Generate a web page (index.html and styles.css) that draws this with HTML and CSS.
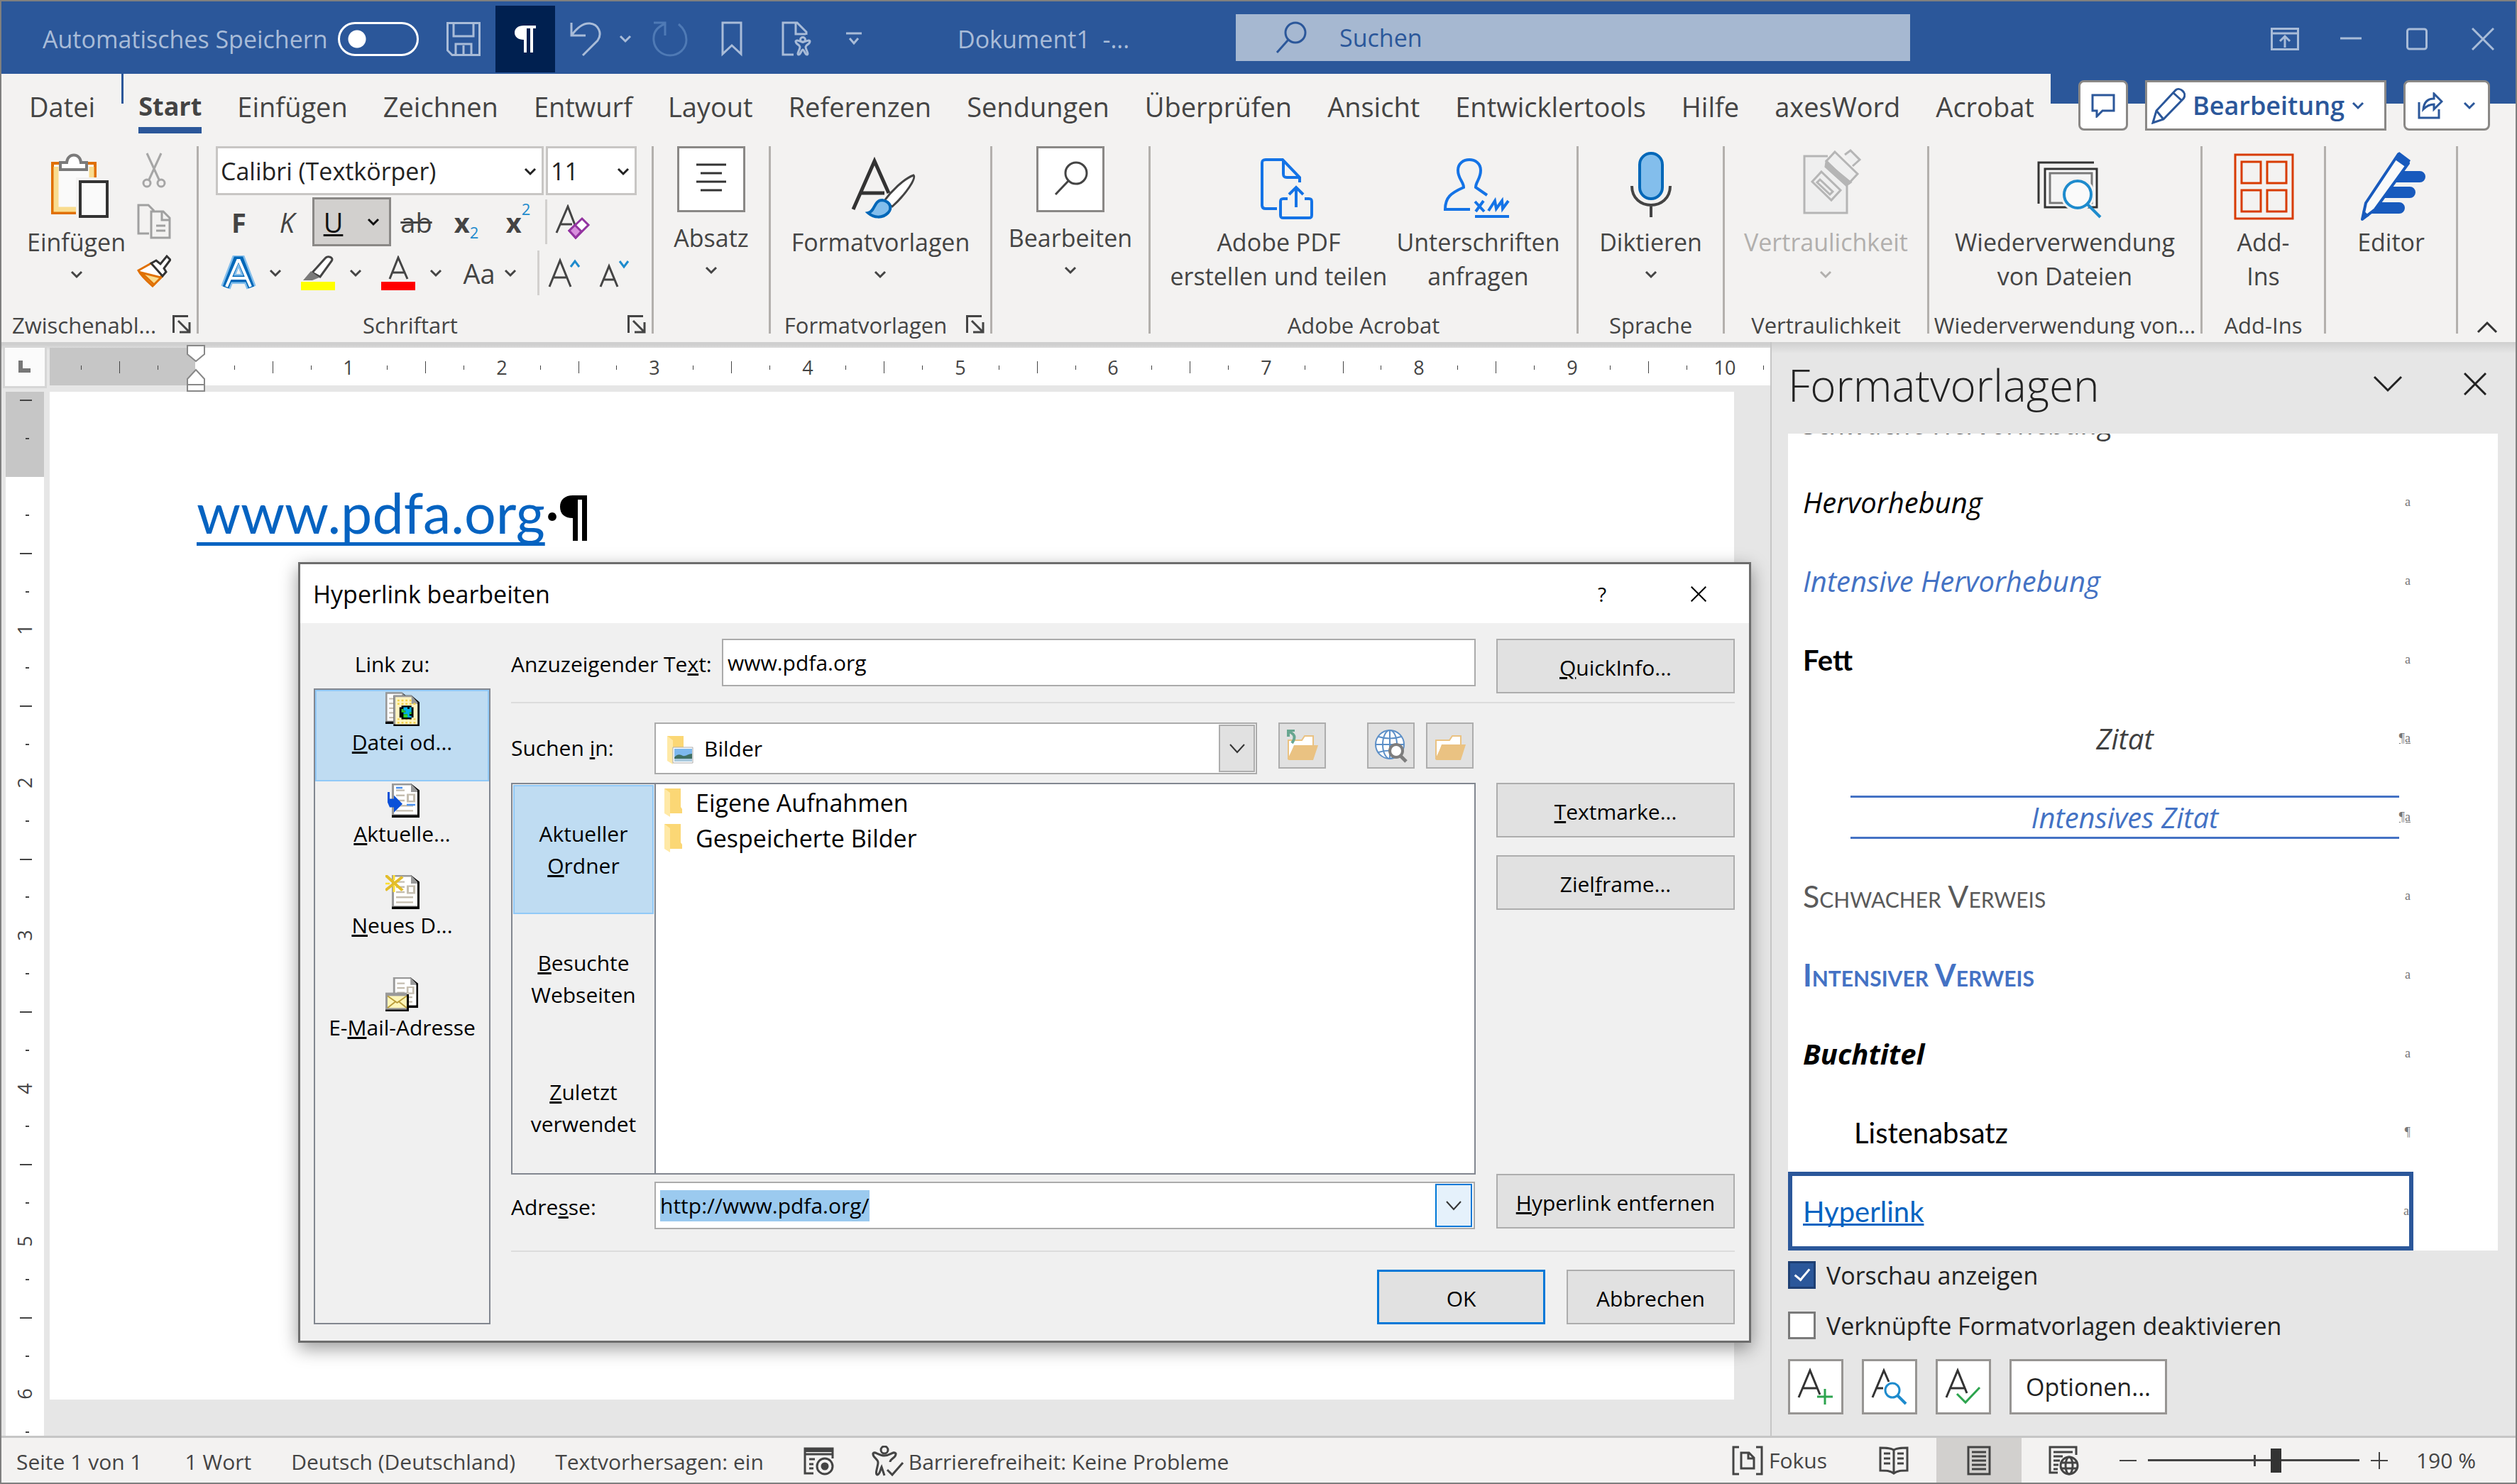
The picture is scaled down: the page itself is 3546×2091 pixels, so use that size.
FILE: index.html
```html
<!DOCTYPE html>
<html lang="de">
<head>
  <meta charset="UTF-8">
  <meta name="viewport" content="width=device-width, initial-scale=1">
  <title>Dokument1 - Word</title>
  <link rel="stylesheet" href="styles.css">
</head>
<body>

<svg class="defs" aria-hidden="true">
  <symbol id="chevron" viewBox="0 0 18 12"><path d="M2 2l7 7 7-7" fill="none" stroke="currentColor" stroke-width="3"/></symbol>
  <symbol id="launcher" viewBox="0 0 26 26"><path d="M1.500 25V1.500H22M8 8l15 15M24 10v14H10" fill="none" stroke="currentColor" stroke-width="3"/></symbol>
  <symbol id="close" viewBox="0 0 32 32"><path d="M1 1l30 30M31 1L1 31" fill="none" stroke="currentColor" stroke-width="3"/></symbol>
  <symbol id="folder" viewBox="0 0 28 42">
    <path d="M2 1h23v26l2 3v6H8z" fill="#fbd775"/>
    <path d="M2 1l8 6v34l-8-5z" fill="#ffe9a6"/>
  </symbol>
  <symbol id="sheet" viewBox="0 0 13 20">
    <path d="M0 0h9l4 4v16H0z" fill="#000"/>
    <path d="M0 0h9l3 4v14.500H0z" fill="#999"/>
    <path d="M1 1h8v4h3v13H1z" fill="#fff"/>
    <path d="M2 4h4M2 7h4M2 10h4M2 13h8M2 16h8" stroke="#c5beb0" stroke-width="1"/>
    <path d="M7.500 6.500h3v4h-3z" fill="#fff" stroke="#c5beb0"/>
  </symbol>
</svg>

<div class="window">

  <header class="titlebar">
    <div class="quick">
      <label class="autosave">Automatisches Speichern <input type="checkbox" class="toggle"></label>
      <button class="qbtn" aria-label="Speichern">
        <svg width="48" height="48" viewBox="0 0 48 48" fill="none" stroke="currentColor" stroke-width="3"><path d="M1.500 1.500h45v45H8l-6.500-6.500zM10 2v18h28V2M13 46V31h22v15M24 33v13"/></svg>
      </button>
      <button class="qbtn active" aria-label="Formatierungszeichen">
        <svg width="32" height="38" viewBox="0 0 32 38"><path d="M31 0v4h-4v34h-4V4h-5v34h-4V20C6 20 1 16 1 10S6 0 14 0z" fill="#fff"/></svg>
      </button>
      <button class="qbtn undo" aria-label="Rückgängig">
        <svg width="44" height="50" viewBox="0 0 44 50" fill="none" stroke="currentColor" stroke-width="3"><path d="M2 2v18h20M2 20C10 9 18 2 28 3c12 1 18 14 11 24L18 48"/></svg>
      </button>
      <button class="qdrop" aria-label="Rückgängig-Liste"><svg class="chev"><use href="#chevron"/></svg></button>
      <button class="qbtn dim" aria-label="Wiederholen">
        <svg width="50" height="50" viewBox="0 0 50 50" fill="none" stroke="currentColor" stroke-width="3"><path d="M2 2h16v18M17 4C5 9 1 17 2 27c1 12 11 21 23 21s23-9 23-22C48 16 43 9 37 4"/></svg>
      </button>
      <button class="qbtn" aria-label="Textmarke">
        <svg width="30" height="50" viewBox="0 0 30 50" fill="none" stroke="currentColor" stroke-width="3"><path d="M2 2h26v44L15 34 2 46z"/></svg>
      </button>
      <button class="qbtn access" aria-label="Barrierefreiheit prüfen">
        <svg width="46" height="50" viewBox="0 0 46 50" fill="none" stroke="currentColor" stroke-width="3"><path d="M17 47H2V2h20l13 13v4M20 2v16h14"/><circle cx="30" cy="26" r="3.500"/><path d="M20 28c0 5 5 4 6 8 0 4-5 10-2 11 3 0 4-7 6-7s3 7 6 7c3-1-2-7-2-11 1-4 6-3 6-8-1-3-5 1-10 1s-8-4-10-1z"/></svg>
      </button>
      <button class="qdrop" aria-label="Anpassen"><svg width="24" height="20" viewBox="0 0 24 20" fill="none" stroke="currentColor" stroke-width="3"><path d="M1 2h22M6 9l6 7 6-7"/></svg></button>
    </div>
    <div class="doc-title">Dokument1&nbsp; -...</div>
    <div class="search">
      <svg width="44" height="46" viewBox="0 0 44 46" fill="none" stroke="#2b579a" stroke-width="3"><circle cx="28" cy="16" r="14"/><path d="M18 26L2 44"/></svg>
      <input type="search" aria-label="Suchen" placeholder="Suchen">
    </div>
    <div class="wincontrols">
      <button aria-label="Menüband-Anzeigeoptionen"><svg width="40" height="32" viewBox="0 0 40 32" fill="none" stroke="currentColor" stroke-width="3"><path d="M1.500 1.500h37v29h-37zM2 8h36M20 28V12M13 19l7-7 7 7"/></svg></button>
      <button aria-label="Minimieren"><svg width="30" height="32" viewBox="0 0 30 32" stroke="currentColor" stroke-width="3"><path d="M0 15h30"/></svg></button>
      <button aria-label="Maximieren"><svg width="30" height="32" viewBox="0 0 30 32" fill="none" stroke="currentColor" stroke-width="3"><rect x="1.500" y="2" width="27" height="28" rx="3"/></svg></button>
      <button aria-label="Schließen"><svg width="32" height="32"><use href="#close"/></svg></button>
    </div>
  </header>

  <div class="tabbar">
    <nav class="tabs">
      <a href="#">Datei</a>
      <span class="tab-mark"></span>
      <a href="#" class="current">Start</a>
      <a href="#">Einfügen</a>
      <a href="#">Zeichnen</a>
      <a href="#">Entwurf</a>
      <a href="#">Layout</a>
      <a href="#">Referenzen</a>
      <a href="#">Sendungen</a>
      <a href="#">Überprüfen</a>
      <a href="#">Ansicht</a>
      <a href="#">Entwicklertools</a>
      <a href="#">Hilfe</a>
      <a href="#">axesWord</a>
      <a href="#">Acrobat</a>
    </nav>
    <div class="tab-actions">
      <button class="act comment" aria-label="Kommentare">
        <svg width="34" height="34" viewBox="0 0 34 34" fill="none" stroke="currentColor" stroke-width="3"><path d="M2 2h30v22H16l-8 8v-8H2z"/></svg>
      </button>
      <button class="act mode">
        <svg width="48" height="52" viewBox="0 0 48 52" fill="none" stroke="currentColor" stroke-width="3"><path d="M2 50l5-17L34 4c6-5 17 4 11 12L17 45zM31 8l11 10M7 33l10 12"/></svg>
        Bearbeitung
        <svg class="chev"><use href="#chevron"/></svg>
      </button>
      <button class="act share" aria-label="Freigeben">
        <svg width="36" height="38" viewBox="0 0 36 38" fill="none" stroke="currentColor" stroke-width="3"><path d="M2 14v22h28V24M8 24c1-10 6-15 15-15V2l11 11-11 11v-7c-6 0-10 2-15 7z"/></svg>
        <svg class="chev"><use href="#chevron"/></svg>
      </button>
    </div>
  </div>

  <section class="ribbon">
    <div class="group clipboard">
      <div class="group-body">
        <button class="big">
          <svg class="icon" width="94" height="96" viewBox="-10 0 94 96">
            <path d="M3 18h60v70H3z" fill="#fafafa" stroke="#e07000" stroke-width="4"/>
            <path d="M8 23v60h30" fill="none" stroke="#f9dc8f" stroke-width="7"/><path d="M58 23v22" stroke="#f9dc8f" stroke-width="7"/>
            <path d="M14 27V17h9c1-14 19-14 20 0h8v10z" fill="#fff" stroke="#7a7a7a" stroke-width="4"/>
            <path d="M36 38h46v56H36z" fill="#f3f2f1"/><path d="M42 44h38v49H42z" fill="#fafafa" stroke="#333" stroke-width="4"/>
          </svg>
          <span>Einfügen</span>
          <svg class="chev"><use href="#chevron"/></svg>
        </button>
        <div class="stack">
          <button aria-label="Ausschneiden"><svg width="34" height="50" viewBox="0 0 34 50" fill="none" stroke="#a6a6a6" stroke-width="3"><path d="M7 1l17 37M27 1L10 38"/><circle cx="7" cy="43" r="5"/><circle cx="27" cy="43" r="5"/></svg></button>
          <button aria-label="Kopieren"><svg width="48" height="50" viewBox="0 0 48 50" fill="none" stroke="#a0a0a0" stroke-width="3"><path d="M17 42H2V2h14l8 8M20 11h17l9 9v28H20zM35 12v11h10M27 31h13M27 38h13"/></svg></button>
          <button aria-label="Format übertragen"><svg width="48" height="46" viewBox="0 0 48 46" fill="none" stroke-width="3"><path d="M20 12L2 22c4 8 12 15 20 22l14-16z" fill="#fff" stroke="#e07000"/><path d="M6 25l18 17 10-10z" fill="#f9dc8f" stroke="#e07000"/><path d="M20 12l7-4 6 5L42 2l5 5-9 12 3 5-5 6z" fill="#fff" stroke="#333"/></svg></button>
        </div>
      </div>
      <div class="group-label"><span>Zwischenabl...</span><button class="launch" aria-label="Zwischenablage öffnen"><svg width="26" height="26"><use href="#launcher"/></svg></button></div>
    </div>

    <div class="group font">
      <div class="font-rows">
        <div class="row">
          <div class="combo family">
            <select aria-label="Schriftart"><option>Calibri (Textkörper)</option></select>
            <svg class="chev"><use href="#chevron"/></svg>
          </div>
          <div class="combo size">
            <select aria-label="Schriftgrad"><option>11</option></select>
            <svg class="chev"><use href="#chevron"/></svg>
          </div>
        </div>
        <div class="row">
          <button class="f w64"><b>F</b></button>
          <button class="f w64"><i>K</i></button>
          <button class="f underline-btn"><u>U</u><svg class="chev"><use href="#chevron"/></svg></button>
          <button class="f w64"><s>ab</s></button>
          <button class="f w72"><b>x</b><sub>2</sub></button>
          <button class="f w72"><b>x</b><sup>2</sup></button>
          <span class="vsep"></span>
          <button class="f w64" aria-label="Formatierung löschen"><svg width="50" height="50" viewBox="0 0 50 50" fill="none" stroke-width="3"><path d="M2 40L18 3l10 26M7 28h17" stroke="#444"/><path d="M20 37l18-17 9 9-18 18z" fill="#fff" stroke="#9333a0"/><path d="M20 37l8-8 9 9-8 9z" fill="#d88fdd" stroke="#9333a0"/></svg></button>
        </div>
        <div class="row">
          <button class="f w56 gap-left" aria-label="Texteffekte"><svg width="50" height="50" viewBox="0 0 50 50"><path d="M7 45L22 6h6l15 39M13 33h24" fill="none" stroke="#83beec" stroke-width="14"/><path d="M7 45L22 6h6l15 39M13 33h24" fill="none" stroke="#0067b8" stroke-width="9"/><path d="M8 44L24 7h2l16 37M14 32h22" fill="none" stroke="#fff" stroke-width="4"/></svg></button>
          <button class="f drop" aria-label="Texteffekte-Liste"><svg class="chev"><use href="#chevron"/></svg></button>
          <button class="f w56" aria-label="Texthervorhebungsfarbe"><svg width="50" height="50" viewBox="0 0 50 50"><path d="M16 24L34 4c3-4 13-2 9 4L27 30z" fill="#fff" stroke="#444" stroke-width="3"/><path d="M14 22l12 9-10 4H3z" fill="#7a7a7a"/><path d="M0 37h48v12H0z" fill="#ff0"/></svg></button>
          <button class="f drop" aria-label="Hervorhebungsfarben"><svg class="chev"><use href="#chevron"/></svg></button>
          <button class="f w56" aria-label="Schriftfarbe"><svg width="50" height="50" viewBox="0 0 50 50"><path d="M12 33L24 3l13 30M16 24h17" fill="none" stroke="#444" stroke-width="3"/><path d="M0 37h48v12H0z" fill="red"/></svg></button>
          <button class="f drop" aria-label="Schriftfarben"><svg class="chev"><use href="#chevron"/></svg></button>
          <button class="f aa">Aa<svg class="chev"><use href="#chevron"/></svg></button>
          <span class="vsep"></span>
          <button class="f w64" aria-label="Schriftgrad vergrößern"><svg width="48" height="44" viewBox="0 0 48 44" fill="none" stroke-width="3"><path d="M2 41L17 4l15 37M7 28h20" stroke="#444"/><path d="M32 13l6-8 6 8" stroke="#1e8bcd"/></svg></button>
          <button class="f w72" aria-label="Schriftgrad verkleinern"><svg width="44" height="44" viewBox="0 0 44 44" fill="none" stroke-width="3"><path d="M2 41L14 12l12 29M6 31h16" stroke="#444"/><path d="M29 5l6 8 6-8" stroke="#1e8bcd"/></svg></button>
        </div>
      </div>
      <div class="group-label"><span>Schriftart</span><button class="launch" aria-label="Schriftart öffnen"><svg width="26" height="26"><use href="#launcher"/></svg></button></div>
    </div>

    <div class="group">
      <div class="group-body">
        <button class="big boxed">
          <svg class="box" width="96" height="93" viewBox="0 0 96 93"><path d="M1.500 1.500h93v90h-93z" fill="#fff" stroke="#8a8886" stroke-width="3"/><path d="M27 26h42M33 38h30M27 50h42M33 62h30" stroke="#333" stroke-width="3"/></svg>
          <span>Absatz</span>
          <svg class="chev"><use href="#chevron"/></svg>
        </button>
      </div>
    </div>

    <div class="group">
      <div class="group-body">
        <button class="big">
          <svg class="icon" width="106" height="96" viewBox="-10 0 106 96"><path d="M5 83L35 15l20 45M15 60h34" fill="none" stroke="#333" stroke-width="5"/><path d="M48 72C58 58 76 40 90 35c4 4-10 26-30 44z" fill="#fff" stroke="#444" stroke-width="3"/><path d="M26 88c10-2 8-18 20-18 12 2 14 12 8 18-8 8-20 7-28 0z" fill="#83beec" stroke="#0067b8" stroke-width="4"/></svg>
          <span>Formatvorlagen</span>
          <svg class="chev"><use href="#chevron"/></svg>
        </button>
      </div>
      <div class="group-label"><span>Formatvorlagen</span><button class="launch" aria-label="Formatvorlagen öffnen"><svg width="26" height="26"><use href="#launcher"/></svg></button></div>
    </div>

    <div class="group">
      <div class="group-body">
        <button class="big boxed">
          <svg class="box" width="96" height="93" viewBox="0 0 96 93"><path d="M1.500 1.500h93v90h-93z" fill="#fff" stroke="#8a8886" stroke-width="3"/><g fill="none" stroke="#444" stroke-width="3"><circle cx="56" cy="38" r="15"/><path d="M45 49L27 68"/></g></svg>
          <span>Bearbeiten</span>
          <svg class="chev"><use href="#chevron"/></svg>
        </button>
      </div>
    </div>

    <div class="group acrobat">
      <div class="group-body">
        <button class="big">
          <svg class="icon" width="120" height="96" viewBox="-24 0 120 96" fill="none" stroke="#1473e6" stroke-width="4"><path d="M34 82H18c-4 0-5-2-5-5V18c0-4 1-5 5-5h24l24 25v7M43 14v19c0 4 1 5 5 5h17"/><path d="M49 68h-6c-3 0-4 1-4 4v19c0 3 1 4 4 4h36c3 0 4-1 4-4V72c0-3-1-4-4-4h-6M61 80V52M51 62l10-10 10 10"/></svg>
          <span>Adobe PDF<br>erstellen und teilen</span>
        </button>
        <button class="big">
          <svg class="icon" width="96" height="96" viewBox="0 0 96 96" fill="none" stroke="#1473e6" stroke-width="4"><path d="M37 83H2C2 66 10 60 28 52c0-8-8-12-8-24 0-20 32-20 32 0 0 12-7 16-7 24l16 11"/><path d="M44 72l13 14M56 71L45 86M63 85l9-14 2 11 8-11 1 11 8-11M44 93h48"/></svg>
          <span>Unterschriften<br>anfragen</span>
        </button>
      </div>
      <div class="group-label"><span>Adobe Acrobat</span></div>
    </div>

    <div class="group">
      <div class="group-body">
        <button class="big">
          <svg class="icon" width="60" height="96" viewBox="0 0 60 96" fill="none"><rect x="14" y="4" width="32" height="64" rx="16" fill="#83beec" stroke="#0067b8" stroke-width="4"/><path d="M3 50c0 36 54 36 54 0M30 77v17" stroke="#444" stroke-width="4"/></svg>
          <span>Diktieren</span>
          <svg class="chev"><use href="#chevron"/></svg>
        </button>
      </div>
      <div class="group-label"><span>Sprache</span></div>
    </div>

    <div class="group">
      <div class="group-body">
        <button class="big" disabled>
          <svg class="icon" width="102" height="96" viewBox="-18 0 102 96" fill="#efefef" stroke="#b5b5b5" stroke-width="3"><path d="M36 8H3v80h60V48"/><path d="M27 30l27 26-13 14-27-26z"/><path d="M25 41l18 17-4 4-18-17z"/><path d="M60 6l8-6 13 13-10 9"/><path d="M46 2l32 31-12 13-32-31z"/><path d="M34 16l7 7 27 22-6 4-29-26z" fill="#b5b5b5"/></svg>
          <span>Vertraulichkeit</span>
          <svg class="chev"><use href="#chevron"/></svg>
        </button>
      </div>
      <div class="group-label"><span>Vertraulichkeit</span></div>
    </div>

    <div class="group">
      <div class="group-body">
        <button class="big">
          <svg class="icon" width="108" height="96" viewBox="-12 0 108 96" fill="none" stroke="#333" stroke-width="3"><path d="M5 75V17h78"/><path d="M14 26h73v54H14z" fill="#fafafa"/><path d="M21 32h59v42H21z" fill="#f5f5f5" stroke="#7a7a7a"/><circle cx="60" cy="62" r="24" fill="#f3f2f1" stroke="none"/><circle cx="60" cy="62" r="19" fill="#fafafa" stroke="#1e8bcd" stroke-width="4"/><path d="M74 76l18 18" stroke="#1e8bcd" stroke-width="4"/></svg>
          <span>Wiederverwendung<br>von Dateien</span>
        </button>
      </div>
      <div class="group-label"><span>Wiederverwendung von...</span></div>
    </div>

    <div class="group">
      <div class="group-body">
        <button class="big">
          <svg class="icon" width="84" height="96" viewBox="0 0 84 96" fill="none" stroke="#d83b01" stroke-width="3"><path d="M2 6h81v90H2zM11 16h27v30H11zM47 16h27v30H47zM11 56h27v30H11zM47 56h27v30H47z"/></svg>
          <span>Add-<br>Ins</span>
        </button>
      </div>
      <div class="group-label"><span>Add-Ins</span></div>
    </div>

    <div class="group">
      <div class="group-body">
        <button class="big">
          <svg class="icon" width="100" height="96" viewBox="-6 0 100 96"><path d="M58 29h26a8 8 0 0 1 0 16H46zM43 51h27a8 8 0 0 1 0 16H32zM27 73h28a8 8 0 0 1 0 16H14z" fill="#185abd"/><path d="M54 5L8 74 3 97l18-14L68 18z" fill="#fafafa" stroke="#185abd" stroke-width="4" stroke-linejoin="round"/><path d="M55 2l16 12-6 10-17-12zM4 84l9 8-11 6z" fill="#185abd"/></svg>
          <span>Editor</span>
        </button>
      </div>
    </div>

    <div class="group last">
      <button class="collapse" aria-label="Menüband reduzieren"><svg width="30" height="18" viewBox="0 0 30 18" fill="none" stroke="#333" stroke-width="3"><path d="M2 16L15 3l13 13"/></svg></button>
    </div>
  </section>

  <main class="workspace">
    <section class="editor">
      <div class="corner">
        <button class="tabstop" aria-label="Tabstopp"><svg width="18" height="18" viewBox="0 0 18 18"><path d="M3 0v14h14" fill="none" stroke="#777" stroke-width="6"/></svg></button>
      </div>
      <div class="hruler">
        <svg id="hruler" width="100%" height="53"></svg>
        <svg class="indent" width="26" height="66" viewBox="0 0 26 66" fill="#fff" stroke="#888" stroke-width="2"><path d="M1 1h24v12L13 23 1 13zM1 65V48l12-13 12 13v17zM1 56h24"/></svg>
      </div>
      <div class="vruler"><svg id="vruler" width="54" height="100%"></svg></div>
      <article class="page">
        <p><a href="#">www.pdfa.org</a><span>·</span><svg width="40" height="64" viewBox="0 0 38 64"><path d="M38 0v64h-7V6h-6v58h-7V32C6 32 0 26 0 16S7 0 18 0z"/></svg></p>
      </article>
    </section>

    <aside class="pane">
      <header>
        <h2>Formatvorlagen</h2>
        <button aria-label="Optionen des Aufgabenbereichs"><svg width="42" height="24" viewBox="0 0 42 24" fill="none" stroke="#222" stroke-width="3"><path d="M2 2l19 19L40 2"/></svg></button>
        <button aria-label="Schließen"><svg width="32" height="32"><use href="#close"/></svg></button>
      </header>
      <ul class="styles">
        <li class="soft"><i>Schwache Hervorhebung</i><small>a</small></li>
        <li><i>Hervorhebung</i><small>a</small></li>
        <li class="accent"><i>Intensive Hervorhebung</i><small>a</small></li>
        <li><b>Fett</b><small>a</small></li>
        <li class="soft quote"><i>Zitat</i><small><u>¶a</u></small></li>
        <li class="accent quote lined"><i>Intensives Zitat</i><small><u>¶a</u></small></li>
        <li class="soft caps"><span>Schwacher Verweis</span><small>a</small></li>
        <li class="accent caps"><b>Intensiver Verweis</b><small>a</small></li>
        <li><b><i>Buchtitel</i></b><small>a</small></li>
        <li class="para"><span>Listenabsatz</span><small>¶</small></li>
        <li class="selected"><a href="#">Hyperlink</a><small>a</small></li>
      </ul>
      <label class="check"><input type="checkbox" checked>Vorschau anzeigen</label>
      <label class="check"><input type="checkbox">Verknüpfte Formatvorlagen deaktivieren</label>
      <div class="pane-buttons">
        <button class="sq" aria-label="Neue Formatvorlage"><svg width="52" height="56" viewBox="0 0 52 56" fill="none" stroke-width="3"><path d="M2 43L18 5l14 34M8 30h20" stroke="#333"/><path d="M39 31v22M28 42h22" stroke="#2da44e"/></svg></button>
        <button class="sq" aria-label="Formatinspektor"><svg width="52" height="56" viewBox="0 0 52 56" fill="none" stroke-width="3"><path d="M2 43L18 5l7 16M8 30h9" stroke="#333"/><circle cx="30" cy="33" r="10" stroke="#1e8bcd"/><path d="M37 40l12 12" stroke="#1e8bcd" stroke-width="4"/></svg></button>
        <button class="sq" aria-label="Formatvorlagen verwalten"><svg width="52" height="56" viewBox="0 0 52 56" fill="none" stroke-width="3"><path d="M2 43L18 5l13 32M8 30h20" stroke="#333"/><path d="M17 38l12 12 20-21" stroke="#2da44e"/></svg></button>
        <button class="options">Optionen...</button>
      </div>
    </aside>
  </main>

  <footer class="status">
    <div class="status-left">
      <span class="s-page">Seite 1 von 1</span>
      <span class="s-words">1 Wort</span>
      <span class="s-lang">Deutsch (Deutschland)</span>
      <span class="s-pred">Textvorhersagen: ein</span>
      <svg class="s-macro" width="44" height="42" viewBox="0 0 44 42" fill="none" stroke="#444" stroke-width="3"><path d="M14 38H2V3h39v14M2 11h39M8 18h8M8 25h6M8 31h6"/><path d="M2 6h39" stroke-width="4"/><circle cx="30" cy="28" r="11"/><circle cx="30" cy="28" r="4" fill="#444"/></svg>
      <svg class="s-acc" width="46" height="44" viewBox="0 0 46 44" fill="none" stroke="#444" stroke-width="3"><circle cx="18" cy="6" r="5"/><path d="M18 42l-4-12c-2 4-2 10-6 11-4-1 1-12 1-17 0-6-8-7-7-13 2-4 8 3 16 3s13-7 16-3c1 6-8 7-8 12M22 34l7 7 15-17"/></svg>
      <span>Barrierefreiheit: Keine Probleme</span>
    </div>
    <div class="status-right">
      <button class="focus"><svg width="44" height="42" viewBox="0 0 44 42" fill="none" stroke="#444" stroke-width="3"><path d="M10 2H2v38h8M34 2h8v38h-8M13 10h11l7 7v15H13zM23 10v8h8"/></svg>Fokus</button>
      <button class="view" aria-label="Lesemodus"><svg width="42" height="40" viewBox="0 0 42 40" fill="none" stroke="#444" stroke-width="3"><path d="M21 5C16 2 10 2 2 2v32c8 0 14 0 19 4 5-4 11-4 19-4V2c-8 0-14 0-19 3zM21 5v32M7 10h9M7 17h9M7 24h9M26 10h9M26 17h9M26 24h9"/></svg></button>
      <button class="view on" aria-label="Seitenlayout"><svg width="34" height="42" viewBox="0 0 34 42" fill="none" stroke="#444" stroke-width="3"><path d="M2 2h30v38H2zM7 9h20M7 15h20M7 21h20M7 27h20M7 33h20"/></svg></button>
      <button class="view" aria-label="Weblayout"><svg width="44" height="42" viewBox="0 0 44 42" fill="none" stroke="#444" stroke-width="3"><path d="M13 38H2V2h37v11M7 9h27M7 15h13M7 21h9M7 27h7M7 33h6"/><circle cx="29" cy="28" r="12"/><ellipse cx="29" cy="28" rx="5" ry="12"/><path d="M17 24h24M17 32h24"/></svg></button>
      <button class="zoom-step" aria-label="Verkleinern"><svg width="24" height="24" viewBox="0 0 24 24" stroke="#444" stroke-width="2"><path d="M0 12h24"/></svg></button>
      <input class="zoom" type="range" min="0" max="100" value="61" aria-label="Zoom">
      <button class="zoom-step" aria-label="Vergrößern"><svg width="24" height="24" viewBox="0 0 24 24" stroke="#444" stroke-width="2"><path d="M0 12h24M12 0v24"/></svg></button>
      <span class="percent">190 %</span>
    </div>
  </footer>

  <div class="dialog" role="dialog" aria-label="Hyperlink bearbeiten">
    <header>
      <h1>Hyperlink bearbeiten</h1>
      <button class="help" aria-label="Hilfe">?</button>
      <button aria-label="Schließen"><svg width="22" height="22"><use href="#close"/></svg></button>
    </header>
    <div class="dialog-body">
      <div class="linkto">
        <span class="linkto-title">Link zu:</span>
        <div class="linkto-list">
          <button class="on">
            <svg width="48" height="48" viewBox="0 0 17 20" preserveAspectRatio="none"><use href="#sheet" x="0" y="0" width="12" height="19"/><path d="M4 2h9l4 4v14H4z"/><path d="M4 2h9l3 4v13H4z" fill="#999"/><path d="M5 3h8v4h3v12H5z" fill="#fff4c2"/><path d="M6 5h7M6 7h9M6 16h9M6 18h9" stroke="#f2d24b" stroke-dasharray="1 1"/><path d="M8 8h5v1h1v6h-1v1H8v-1H7V9h1z"/><path d="M9 9h2v1h1V9h1v3h-1v2h1v1h-2v-2H9v-1h1v-1H9z" fill="#00b0e8"/><path d="M8 10h1v1h1v1H8zM9 13h2v2H9zM12 12h1v1h-1z" fill="#2fd02f"/></svg>
            <span><u>D</u>atei od...</span>
          </button>
          <button>
            <svg width="48" height="48" viewBox="0 0 16 20" preserveAspectRatio="none"><use href="#sheet" x="3" y="0" width="13" height="20"/><path d="M1 5h1v4h2V7l4 5-4 5v-3H2l-1-3z" fill="#0a50d8"/><path d="M5 2.500h3M10 12.500h4" stroke="#4a90f0"/></svg>
            <span><u>A</u>ktuelle...</span>
          </button>
          <button>
            <svg width="48" height="48" viewBox="0 0 16 20" preserveAspectRatio="none"><use href="#sheet" x="3" y="0" width="13" height="20"/><path d="M0 0l8 9M8 1L0 9" stroke="#e3bd2a" stroke-width="1.500"/><path d="M4 0v3M4 6v4M0 5h2" stroke="#ffdf30" stroke-width="1"/></svg>
            <span><u>N</u>eues D...</span>
          </button>
          <button class="mail">
            <svg width="48" height="48" viewBox="0 0 16 20" preserveAspectRatio="none"><use href="#sheet" x="3" y="0" width="13" height="18"/><path d="M0 10h11v10H0z"/><path d="M0 9h10v10H0z" fill="#999"/><path d="M1 11h9v7H1z" fill="#fff6b8"/><path d="M1 11l4.500 4L10 11M1 18l4-4M10 18l-4-4" fill="none" stroke="#b99c3a" stroke-width=".7"/></svg>
            <span>E-<u>M</u>ail-Adresse</span>
          </button>
        </div>
      </div>
      <form class="fields" onsubmit="return false">
        <div class="line top-line">
          <label for="display" class="wide">Anzuzeigender Te<u>x</u>t:</label>
          <input id="display" type="text" value="www.pdfa.org">
          <button class="cmd"><span><u>Q</u>uickInfo...</span></button>
        </div>
        <hr>
        <div class="line look-line">
          <label for="lookin">Suchen <u>i</u>n:</label>
          <div class="lookin">
            <svg class="folder-pic" width="40" height="42" viewBox="0 0 40 42"><use href="#folder" width="28" height="42"/><path d="M10 17h28v22H10z" fill="#fff" stroke="#aaa"/><path d="M12 19h25v18H12z" fill="#7db8ee"/><path d="M12 31c5-5 8-4 12-2 4 1 8-3 13-3v11H12z" fill="#3f6f63"/><path d="M12 33h25v4H12z" fill="#a9c9de"/></svg>
            <select id="lookin"><option>Bilder</option></select>
            <span class="drop"><svg width="26" height="14" viewBox="0 0 26 14" fill="none" stroke="#333" stroke-width="2"><path d="M3 1l10 11L23 1"/></svg></span>
          </div>
          <button class="tool up" aria-label="Übergeordneter Ordner"><svg width="46" height="46" viewBox="0 0 46 46"><path d="M3 15h19l4-6h12v14H12L3 42z" fill="#fff" stroke="#eac282" stroke-width="2"/><path d="M11 22h34l-7 21H3z" fill="#eac282"/><path d="M12 1H3v9M4 3c8 3 10 8 4 16" fill="none" stroke="#68a690" stroke-width="4"/></svg></button>
          <button class="tool" aria-label="Web durchsuchen"><svg width="48" height="48" viewBox="0 0 48 48" fill="none" stroke="#5c8fc7" stroke-width="2"><circle cx="22" cy="22" r="20" fill="#fff"/><ellipse cx="22" cy="22" rx="10" ry="20"/><path d="M22 2v40M2 22h40M6 11q16 5 32 0M6 33q16-5 32 0"/><circle cx="31" cy="31" r="9" fill="#fff" stroke="#7d7d7d" stroke-width="4"/><path d="M37 38l8 8" stroke="#7d7d7d" stroke-width="5"/></svg></button>
          <button class="tool" aria-label="Datei suchen"><svg width="46" height="46" viewBox="0 0 46 46"><path d="M3 15h19l4-6h12v14H12L3 42z" fill="#fff" stroke="#eac282" stroke-width="2"/><path d="M11 21h34l-7 22H3z" fill="#eac282"/></svg></button>
        </div>
        <div class="line browse">
          <div class="places">
            <button class="on"><span>Aktueller<br><u>O</u>rdner</span></button>
            <button><span><u>B</u>esuchte<br>Webseiten</span></button>
            <button><span><u>Z</u>uletzt<br>verwendet</span></button>
          </div>
          <ul class="files">
            <li><svg width="28" height="42"><use href="#folder"/></svg>Eigene Aufnahmen</li>
            <li><svg width="28" height="42"><use href="#folder"/></svg>Gespeicherte Bilder</li>
          </ul>
          <div class="side">
            <button class="cmd"><span><u>T</u>extmarke...</span></button>
            <button class="cmd"><span>Ziel<u>f</u>rame...</span></button>
            <button class="cmd last-cmd"><span><u>H</u>yperlink entfernen</span></button>
          </div>
        </div>
        <div class="line address">
          <label for="address">Adre<u>s</u>se:</label>
          <div class="addr">
            <input id="address" type="text" value="http://www.pdfa.org/">
            <button class="drop" aria-label="Adressliste"><svg width="26" height="14" viewBox="0 0 26 14" fill="none" stroke="#333" stroke-width="2"><path d="M3 1l10 11L23 1"/></svg></button>
          </div>
        </div>
        <hr>
        <div class="line footer-line">
          <button class="cmd ok">OK</button>
          <button class="cmd cancel">Abbrechen</button>
        </div>
      </form>
    </div>
  </div>

</div>

<script>
  const NS = 'http://www.w3.org/2000/svg';
  const inch = 215.4;

  function add(svg, tag, attrs, text) {
    const el = document.createElementNS(NS, tag);
    for (const k in attrs) el.setAttribute(k, attrs[k]);
    if (text) el.textContent = text;
    svg.appendChild(el);
  }

  // quarter ticks, half ticks and a number on every inch
  function drawRuler(id, zero, vertical, count) {
    const svg = document.getElementById(id);
    for (let q = -3; q <= count; q++) {
      if (q === 0) continue;
      const p = Math.round(zero + q * inch / 4);
      if (p < 0) continue;
      if (q % 4 === 0) {
        if (vertical) add(svg, 'text', { transform: 'translate(37 ' + p + ') rotate(-90)' }, q / 4);
        else add(svg, 'text', { x: p, y: 38 }, q / 4);
      } else {
        const half = q % 2 === 0;
        if (vertical) add(svg, 'rect', { x: half ? 20 : 28, y: p - 1, width: half ? 17 : 5, height: 2 });
        else add(svg, 'rect', { x: p, y: half ? 19 : 25, width: 1, height: half ? 17 : 6 });
      }
    }
  }

  drawRuler('hruler', 206, false, 43);
  drawRuler('vruler', 120, true, 27);

  const address = document.getElementById('address');
  address.focus();
  address.select();
</script>

</body>
</html>
```

FILE: styles.css
```css
* {
  box-sizing: border-box;
}
body {
  margin: 0;
  font-family: "Open Sans", "Noto Sans", sans-serif;
  font-size: 34px;
  color: #444;
}
button, input, select {
  font: inherit;
  color: inherit;
  margin: 0;
  padding: 0;
}
button {
  display: flex;
  align-items: center;
  justify-content: center;
  border: 0;
  background: none;
}
svg {
  display: block;
  flex: none;
}
h1, h2, p, ul {
  margin: 0;
  padding: 0;
  font-weight: 400;
}
ul {
  list-style: none;
}
a {
  color: inherit;
  text-decoration: none;
}
.defs {
  position: absolute;
  width: 0;
  height: 0;
}
.chev {
  width: 18px;
  height: 12px;
}
.window {
  position: relative;
  display: flex;
  flex-direction: column;
  min-height: 100vh;
  border: 2px solid #7f7f7f;
  background: #f3f2f1;
  overflow: hidden;
}

/* title bar */
.titlebar {
  display: grid;
  grid-template-columns: 1347fr 392fr 950fr 853fr;
  height: 102px;
  background: #2b579a;
  color: #a9bcd8;
}
.quick {
  display: flex;
  align-items: center;
  padding-left: 58px;
}
.autosave {
  display: flex;
  align-items: center;
  gap: 14px;
  width: 551px;
  white-space: nowrap;
}
.toggle {
  appearance: none;
  width: 114px;
  height: 48px;
  border: 3px solid #fff;
  border-radius: 24px;
  background: radial-gradient(circle at 24px 21px, #fff 12px, transparent 13px);
}
.qbtn {
  width: 84px;
  height: 94px;
  margin-right: 3px;
}
.qbtn.active {
  background: #002050;
}
.qbtn.undo {
  width: 80px;
}
.qbtn.dim {
  margin-left: 8px;
  color: #4f7ab5;
}
.qbtn.access {
  width: 96px;
  margin-right: 18px;
}
.qdrop {
  width: 26px;
}
.doc-title {
  line-height: 106px;
}
.search {
  display: flex;
  align-items: center;
  gap: 46px;
  height: 66px;
  margin-top: 18px;
  padding-left: 56px;
  background: #a6b8d1;
}
.search input {
  flex: 1;
  border: 0;
  background: none;
  outline: none;
}
.search input::placeholder {
  color: #2b579a;
  opacity: 1;
}
.wincontrols {
  display: flex;
  justify-content: flex-end;
}
.wincontrols button {
  width: 93px;
}

/* tabs */
.tabbar {
  display: grid;
  grid-template-columns: 2887fr 655fr;
  height: 102px;
}
.tabs {
  display: flex;
  gap: 50px;
  padding-left: 39px;
  font-size: 38px;
  line-height: 92px;
  white-space: nowrap;
}
.tabs a {
  position: relative;
}
.tab-mark {
  width: 3px;
  height: 42px;
  margin: 0 -29px 0 -13px;
  background: #2b579a;
}
.tabs .current {
  font-weight: 700;
  font-size: 36px;
}
.tabs .current::after {
  content: "";
  position: absolute;
  left: 0;
  right: 0;
  top: 75px;
  height: 9px;
  background: #2b579a;
}
.tab-actions {
  display: flex;
  gap: 24px;
  padding: 9px 36px 0 39px;
  background: linear-gradient(#2b579a 42px, transparent 42px);
}
.act {
  height: 71px;
  border: 3px solid #8a8886;
  border-radius: 8px;
  background: #fff;
  color: #2b579a;
  font-size: 36px;
  font-weight: 600;
}
.comment {
  width: 70px;
}
.mode {
  flex: 1;
  gap: 10px;
  justify-content: flex-start;
  padding-left: 6px;
  border-radius: 0;
}
.share {
  width: 122px;
  gap: 28px;
}

/* ribbon */
.ribbon {
  display: grid;
  grid-template-columns:
    minmax(0, 278fr) minmax(0, 641fr) minmax(0, 165fr) minmax(0, 312fr)
    minmax(0, 223fr) minmax(0, 603fr) minmax(0, 206fr) minmax(0, 288fr)
    minmax(0, 385fr) minmax(0, 174fr) minmax(0, 186fr) minmax(0, 81fr);
  padding-bottom: 12px;
}
.group {
  position: relative;
  display: flex;
  flex-direction: column;
  justify-content: space-between;
  height: 264px;
  border-right: 3px solid #b3b0ad;
}
.group.last {
  border: 0;
  justify-content: flex-end;
  align-items: center;
}
.group-body {
  display: flex;
  justify-content: center;
}
.group-label {
  display: flex;
  justify-content: center;
  font-size: 31px;
  line-height: 24px;
  white-space: nowrap;
}
.launch {
  position: absolute;
  right: 8px;
  bottom: 0;
}
.group-label:has(.launch) {
  padding-right: 42px;
}
.big {
  flex-direction: column;
  justify-content: flex-start;
  line-height: 48px;
  white-space: nowrap;
}
.big .icon {
  height: 96px;
  margin: 6px 0 9px;
  overflow: visible;
}
.big .box {
  margin-bottom: 12px;
}
.big .chev {
  margin-top: 16px;
}
.big:disabled {
  color: #b1afad;
}
.clipboard .group-body {
  justify-content: flex-start;
  gap: 16px;
  padding-left: 36px;
}
.stack {
  display: flex;
  flex-direction: column;
  gap: 22px;
  padding-top: 9px;
}
.acrobat .group-body {
  gap: 13px;
  padding-left: 4px;
}
.font-rows {
  display: flex;
  flex-direction: column;
  gap: 3px;
  padding-left: 24px;
}
.row {
  display: flex;
  align-items: center;
  gap: 3px;
  height: 69px;
}
.combo {
  position: relative;
  height: 69px;
}
.combo select {
  appearance: none;
  width: 100%;
  height: 100%;
  padding-left: 4px;
  border: 3px solid #c8c6c4;
  background: #fff;
  color: #222;
  font-size: 34px;
}
.combo .chev {
  position: absolute;
  right: 10px;
  top: 30px;
  color: #222;
}
.combo.family {
  width: 462px;
}
.combo.size {
  width: 128px;
}
.f {
  position: relative;
  height: 69px;
  font-size: 38px;
}
.w56 {
  width: 50px;
}
.w64 {
  width: 65px;
}
.w72 {
  width: 70px;
}
.gap-left {
  margin-left: 7px;
}
.f.drop {
  width: 47px;
  margin-right: 10px;
}
.underline-btn {
  width: 111px;
  gap: 34px;
  border: 3px solid #8a8886;
  background: #d2d0ce;
  color: #111;
}
.aa {
  width: 80px;
  gap: 12px;
  margin-right: 24px;
}
.f sub, .f sup {
  color: #1e8bcd;
  font-size: 22px;
  line-height: 22px;
}
.f sub {
  align-self: flex-end;
  margin-bottom: 9px;
}
.f sup {
  align-self: flex-start;
  margin-top: 5px;
}
.vsep {
  width: 3px;
  height: 63px;
  background: #d2d0ce;
}

/* workspace */
.workspace {
  flex: 1;
  display: grid;
  grid-template-columns: 1fr 1050px;
  background: #e6e6e6;
}
.editor {
  display: grid;
  grid-template-columns: 68px 1fr;
  grid-template-rows: 70px 1fr;
  background: linear-gradient(#cfcfcf, #cfcfcf 4px, #e6e6e6 12px);
}
.tabstop {
  width: 62px;
  height: 60px;
  margin: 5px 0 0 2px;
  border: 3px solid #d6d6d6;
  background: #fbfbfb;
}
.hruler {
  position: relative;
  margin-top: 8px;
  height: 53px;
  background: linear-gradient(90deg, #c6c6c6 205px, #fff 205px);
}
.hruler text,
.vruler text {
  font-size: 27px;
  font-weight: 500;
  fill: #444;
  text-anchor: middle;
}
.hruler rect,
.vruler rect {
  fill: #444;
}
.indent {
  position: absolute;
  left: 193px;
  top: -4px;
}
.vruler {
  margin-left: 6px;
  width: 54px;
  height: 100%;
  background: linear-gradient(#c6c6c6 120px, #fff 120px);
}
#vruler {
  position: absolute;
  height: 1470px;
}
.page {
  margin: 0 51px 51px 0;
  padding: 110px 0 0 207px;
  background: #fff;
}
.page p {
  display: flex;
  font-family: Lato, "Open Sans", sans-serif;
  font-size: 79px;
  line-height: 120px;
  color: #000;
}
.page a {
  color: #0563c1;
  text-decoration: underline;
  text-decoration-thickness: 5px;
  text-underline-offset: 12px;
  text-decoration-skip-ink: none;
}
.page svg {
  margin-top: 36px;
}

/* styles pane */
.pane {
  padding: 0 25px 30px 23px;
  border-left: 2px solid #c6c6c6;
  background: linear-gradient(#cfcfcf, #e6e6e6 16px);
  color: #222;
}
.pane header {
  display: flex;
  align-items: center;
  height: 117px;
  padding: 3px 16px 3px 0;
}
.pane h2 {
  flex: 1;
  padding-top: 3px;
  font-size: 62px;
  font-weight: 350;
}
.pane header button {
  margin-left: 86px;
}
.styles {
  display: flex;
  flex-direction: column;
  justify-content: flex-end;
  height: 1151px;
  margin-top: 12px;
  background: #fff;
  overflow: hidden;
  font-family: Lato, "Open Sans", sans-serif;
  font-size: 40px;
  color: #000;
}
.styles li {
  display: flex;
  flex: none;
  align-items: center;
  justify-content: space-between;
  width: 881px;
  height: 111px;
  padding: 0 4px 0 21px;
}
.styles i {
  font-family: "Open Sans", "Noto Sans", sans-serif;
}
.styles small {
  text-align: right;
  font-family: "Liberation Serif", serif;
  font-size: 18px;
  font-variant: normal;
  color: #777;
}
.styles .soft {
  color: #404040;
}
.styles .caps {
  font-size: 43px;
  font-variant: small-caps;
}
.styles .soft.caps {
  color: #5a5a5a;
}
.styles .accent {
  color: #4472c4;
}
.styles .quote i {
  flex: 1;
  margin-left: 67px;
  text-align: center;
  line-height: 55px;
}
.styles .lined i {
  border: solid #4472c4;
  border-width: 3px 0;
}
.styles .para {
  padding-left: 93px;
}
.styles .selected {
  padding: 0 0 0 15px;
  border: 6px solid #2b579a;
}
.selected a {
  color: #0563c1;
  text-decoration: underline;
  text-decoration-thickness: 3px;
  text-decoration-skip-ink: none;
}
.check {
  display: flex;
  align-items: center;
  gap: 15px;
  height: 39px;
  margin-top: 15px;
}
.check + .check {
  margin-top: 32px;
}
.check input {
  appearance: none;
  width: 39px;
  height: 39px;
  border: 3px solid #7a7a7a;
  background: #fff;
}
.check input:checked {
  border-color: #1e3f73;
  background: #2b579a;
}
.check input:checked::after {
  content: "";
  display: block;
  width: 9px;
  height: 18px;
  margin: 3px 0 0 11px;
  border: solid #fff;
  border-width: 0 3px 3px 0;
  transform: rotate(40deg);
}
.pane-buttons {
  display: flex;
  gap: 26px;
  margin-top: 28px;
}
.pane-buttons button {
  width: 78px;
  height: 78px;
  border: 3px solid #979593;
  background: #fff;
}
.pane-buttons .options {
  width: 222px;
}

/* status bar */
.status {
  display: flex;
  justify-content: space-between;
  height: 66px;
  border-top: 3px solid #c6c6c6;
  font-size: 30px;
  white-space: nowrap;
}
.status-left,
.status-right {
  display: flex;
  align-items: center;
}
.status-left {
  padding: 3px 0 0 21px;
}
.s-page {
  margin-right: 60px;
}
.s-words, .s-lang, .s-pred {
  margin-right: 56px;
}
.s-macro {
  margin-right: 52px;
}
.s-acc {
  margin-right: 6px;
}
.focus {
  gap: 8px;
  margin-right: 34px;
}
.view {
  width: 120px;
  height: 63px;
}
.view.on {
  background: #d2d0ce;
}
.zoom-step {
  width: 24px;
}
.view + .zoom-step {
  margin-left: 18px;
}
.zoom {
  appearance: none;
  width: 298px;
  height: 34px;
  margin: 0 16px;
  background:
    linear-gradient(#444, #444) 149px 50% / 3px 16px no-repeat,
    linear-gradient(#444, #444) 0 50% / 100% 3px no-repeat;
}
.zoom::-webkit-slider-thumb {
  appearance: none;
  width: 15px;
  height: 34px;
  background: #333;
}
.percent {
  margin: 0 56px 0 40px;
}

/* hyperlink dialog */
.dialog {
  position: absolute;
  left: 418px;
  top: 790px;
  width: 2047px;
  border: 3px solid #6d6d6d;
  background: #f0f0f0;
  box-shadow: 0 8px 24px rgba(0, 0, 0, 0.4);
  color: #000;
  font-size: 30px;
}
.dialog header {
  display: flex;
  align-items: center;
  height: 83px;
  padding: 0 60px 0 18px;
  background: #fff;
}
.dialog h1 {
  flex: 1;
  font-size: 34px;
}
.dialog .help {
  margin-right: 119px;
  font-size: 28px;
}
.dialog-body {
  display: grid;
  grid-template-columns: 249px 1fr;
  column-gap: 29px;
  padding: 22px 20px 23px 19px;
}
.linkto {
  display: flex;
  flex-direction: column;
}
.linkto-title {
  height: 70px;
  padding: 13px 28px 0 0;
  line-height: 46px;
  text-align: center;
}
.linkto-list {
  flex: 1;
  border: 2px solid #828790;
}
.linkto-list button {
  flex-direction: column;
  justify-content: flex-start;
  width: 100%;
  height: 129px;
  padding-top: 3px;
  line-height: 46px;
}
.linkto-list .on,
.places .on {
  background: #bfdcf2;
  border: 2px solid #91c9f7;
}
.linkto-list .on {
  padding-top: 1px;
}
.linkto-list .mail {
  margin-top: 15px;
}
.linkto-list .mail span {
  white-space: nowrap;
}
.line {
  display: flex;
}
.fields label {
  width: 202px;
  line-height: 72px;
}
.fields .wide {
  width: 297px;
}
.fields hr {
  height: 2px;
  margin: 0;
  border: 0;
  background: #dcdcdc;
}
.fields input {
  outline: none;
}
#display {
  flex: 1;
  height: 67px;
  padding-left: 6px;
  border: 2px solid #ababab;
  background: #fff;
}
.cmd {
  flex: none;
  width: 336px;
  height: 77px;
  padding-top: 3px;
  border: 2px solid #adadad;
  background: #e1e1e1;
}
.top-line .cmd {
  margin-left: 29px;
}
.top-line {
  margin-bottom: 12px;
}
.look-line {
  margin: 27px 0 12px;
}
.lookin {
  position: relative;
  width: 849px;
  height: 73px;
  margin-right: 30px;
  border: 2px solid #ababab;
  background: #fff;
}
.lookin select {
  appearance: none;
  width: 100%;
  height: 100%;
  padding-left: 68px;
  border: 0;
  background: none;
}
.folder-pic {
  position: absolute;
  left: 14px;
  top: 16px;
}
.drop {
  display: flex;
  align-items: center;
  justify-content: center;
}
.lookin .drop {
  position: absolute;
  right: 1px;
  top: 1px;
  width: 51px;
  height: 67px;
  border: 2px solid #adadad;
  background: #e1e1e1;
}
.tool {
  width: 67px;
  height: 65px;
  margin-right: 16px;
  border: 2px solid #adadad;
  background: #e1e1e1;
}
.tool.up {
  margin-right: 58px;
}
.places {
  width: 202px;
  padding: 1px;
  border: 2px solid #828790;
  border-right: 0;
}
.places button {
  width: 100%;
  height: 182px;
  line-height: 45px;
}
.files {
  flex: 1;
  height: 552px;
  padding: 1px 10px;
  border: 2px solid #828790;
  background: #fff;
  font-size: 34px;
  line-height: 50px;
}
.files li {
  display: flex;
  align-items: center;
  gap: 18px;
}
.side {
  display: flex;
  flex-direction: column;
  gap: 25px;
  margin-left: 29px;
}
.last-cmd {
  margin: auto 0 -76px;
}
.address {
  margin: 10px 0 25px;
}
.addr {
  display: flex;
  align-items: center;
  width: 1156px;
  height: 67px;
  padding: 0 2px 0 6px;
  border: 2px solid #ababab;
  background: #fff;
}
.addr input {
  flex: 1;
  height: 44px;
  border: 0;
  line-height: 44px;
}
.addr input::selection {
  background: #9bcaef;
  color: #000;
}
.addr .drop {
  width: 52px;
  height: 61px;
  border: 2px solid #0078d7;
  background: #e5f1fb;
}
.footer-line {
  justify-content: flex-end;
  gap: 30px;
  margin-top: 25px;
}
.footer-line .cmd {
  width: 237px;
}
.footer-line .ok {
  border: 3px solid #0078d7;
}
```
